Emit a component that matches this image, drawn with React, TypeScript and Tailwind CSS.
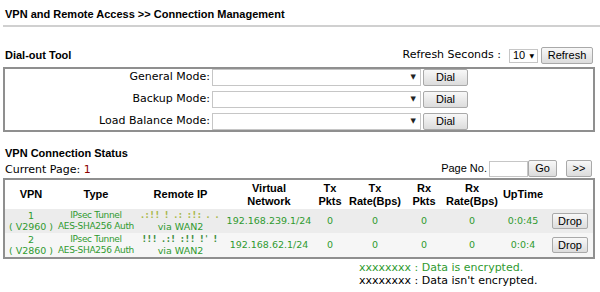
import React from "react";

const ARIAL = "font-['Liberation_Sans',Arial,sans-serif]";
const VERD = "font-['DejaVu_Sans',Verdana,sans-serif]";

function Btn({ children, className = "" }: { children: React.ReactNode; className?: string }) {
  return (
    <div
      className={`flex items-center justify-center bg-gradient-to-b from-[#f8f8f8] to-[#dcdcdc] border border-[#a9a9a9] rounded-[2px] text-[11px] leading-none text-black ${ARIAL} ${className}`}
    >
      {children}
    </div>
  );
}

function Sel() {
  return (
    <div className="h-[17px] w-[209px] bg-white border border-[#c6c6c6] flex items-center justify-end pr-[4px]">
      <span className={`text-[7px] leading-none text-[#222] ${VERD}`}>▼</span>
    </div>
  );
}

const COLS = "grid grid-cols-[52px_78px_91px_86px_36px_54px_44px_52px_50px_45px]";

function Row({
  bg,
  vpn,
  ver,
  ip,
  ipColor,
  net,
  up,
}: {
  bg: string;
  vpn: string;
  ver: string;
  ip: string;
  ipColor: string;
  net: string;
  up: string;
}) {
  const cell = "flex flex-col items-center justify-center text-center whitespace-nowrap";
  return (
    <div className={`${COLS} h-[24px] ${bg} text-[#2f9a2f] ${VERD} text-[9.5px] leading-[11.5px]`}>
      <div className={cell}>
        <span>{vpn}</span>
        <span>{ver}</span>
      </div>
      <div className={`${cell} text-[9px] tracking-[-0.3px] leading-[11.5px]`}>
        <span>IPsec Tunnel</span>
        <span>AES-SHA256 Auth</span>
      </div>
      <div className={cell}>
        <span className={`${ipColor} font-bold tracking-[1.5px] text-[8px] leading-[11.5px]`}>{ip}</span>
        <span>via WAN2</span>
      </div>
      <div className={cell}>{net}</div>
      <div className={cell}>0</div>
      <div className={cell}>0</div>
      <div className={cell}>0</div>
      <div className={cell}>0</div>
      <div className={cell}>{up}</div>
      <div className="flex items-center justify-start pl-[4px]">
        <Btn className="w-[36px] h-[16px]">Drop</Btn>
      </div>
    </div>
  );
}

export default function App() {
  const hcell = "flex flex-col items-center justify-center text-center whitespace-nowrap";
  return (
    <div className="w-[600px] h-[292px] bg-white overflow-hidden text-black">
      <div className={`pl-[5px] pt-[8px] h-[25px] text-[11px] leading-[13px] font-bold ${ARIAL}`}>
        VPN and Remote Access &gt;&gt; Connection Management
      </div>
      <div className="ml-[3px] h-[2px] bg-[#d0d0d0]" />

      <div className="mt-[20px] h-[17px] flex items-center justify-between pl-[5px] pr-[7px]">
        <div className={`text-[11px] font-bold ${ARIAL}`}>Dial-out Tool</div>
        <div className="flex items-center">
          <span className={`text-[11px] ${VERD} mr-[8px]`}>Refresh Seconds :</span>
          <div className="w-[29px] h-[14px] bg-white border border-[#c6c6c6] flex items-center justify-between pl-[3px] pr-[3px]">
            <span className={`text-[11px] leading-none ${ARIAL}`}>10</span>
            <span className={`text-[6px] leading-none ${VERD}`}>▼</span>
          </div>
          <Btn className="ml-[3px] w-[52px] h-[17px]">Refresh</Btn>
        </div>
      </div>

      <div className="mt-[3px] mx-[3px] w-[592px] border-2 border-[#8f8f8f] flex flex-col gap-[5px]">
        {["General Mode:", "Backup Mode:", "Load Balance Mode:"].map((l) => (
          <div key={l} className="flex items-center h-[17px]">
            <div className={`w-[207px] text-right text-[11px] ${VERD} pr-[2px]`}>{l}</div>
            <Sel />
            <Btn className="ml-[2px] w-[45px] h-[17px]">Dial</Btn>
          </div>
        ))}
      </div>

      <div className={`mt-[15px] pl-[5px] h-[13px] text-[11px] leading-[13px] font-bold ${ARIAL}`}>
        VPN Connection Status
      </div>
      <div className="h-[17px] flex items-center justify-between pl-[5px] pr-[8px]">
        <div className={`text-[11px] ${VERD} pt-[3px]`}>
          Current Page: <span className="text-[#8b0000]">1</span>
        </div>
        <div className="flex items-center">
          <span className={`text-[11px] ${ARIAL} mr-[2px]`}>Page No.</span>
          <div className="w-[39px] h-[16px] bg-white border border-[#c6c6c6]" />
          <Btn className="w-[29px] h-[17px]">Go</Btn>
          <Btn className="ml-[9px] w-[26px] h-[17px]">&gt;&gt;</Btn>
        </div>
      </div>

      <div className="mt-[1px] mx-[3px] w-[592px] border-2 border-[#8f8f8f] bg-white">
        <div className={`${COLS} h-[29px] text-[11px] leading-[13px] font-bold ${ARIAL}`}>
          <div className={hcell}>VPN</div>
          <div className={hcell}>Type</div>
          <div className={hcell}>Remote IP</div>
          <div className={hcell}>
            <span>Virtual</span>
            <span>Network</span>
          </div>
          <div className={hcell}>
            <span>Tx</span>
            <span>Pkts</span>
          </div>
          <div className={hcell}>
            <span>Tx</span>
            <span>Rate(Bps)</span>
          </div>
          <div className={hcell}>
            <span>Rx</span>
            <span>Pkts</span>
          </div>
          <div className={hcell}>
            <span>Rx</span>
            <span>Rate(Bps)</span>
          </div>
          <div className={hcell}>UpTime</div>
          <div />
        </div>
        <Row
          bg="bg-[#ececec]"
          vpn="1"
          ver="( V2960 )"
          ip=".:!! ! .: :!: . ."
          ipColor="text-[#a8b84a]"
          net="192.168.239.1/24"
          up="0:0:45"
        />
        <Row
          bg="bg-[#f6f6f6]"
          vpn="2"
          ver="( V2860 )"
          ip="!!! .:! :!! !' !"
          ipColor="text-[#3f8f3f]"
          net="192.168.62.1/24"
          up="0:0:4"
        />
      </div>

      <div className={`mt-[2px] pl-[359px] text-[11px] leading-[13px] ${VERD}`}>
        <div className="text-[#2f9a2f]">xxxxxxxx : Data is encrypted.</div>
        <div className="text-black">xxxxxxxx : Data isn't encrypted.</div>
      </div>
    </div>
  );
}
